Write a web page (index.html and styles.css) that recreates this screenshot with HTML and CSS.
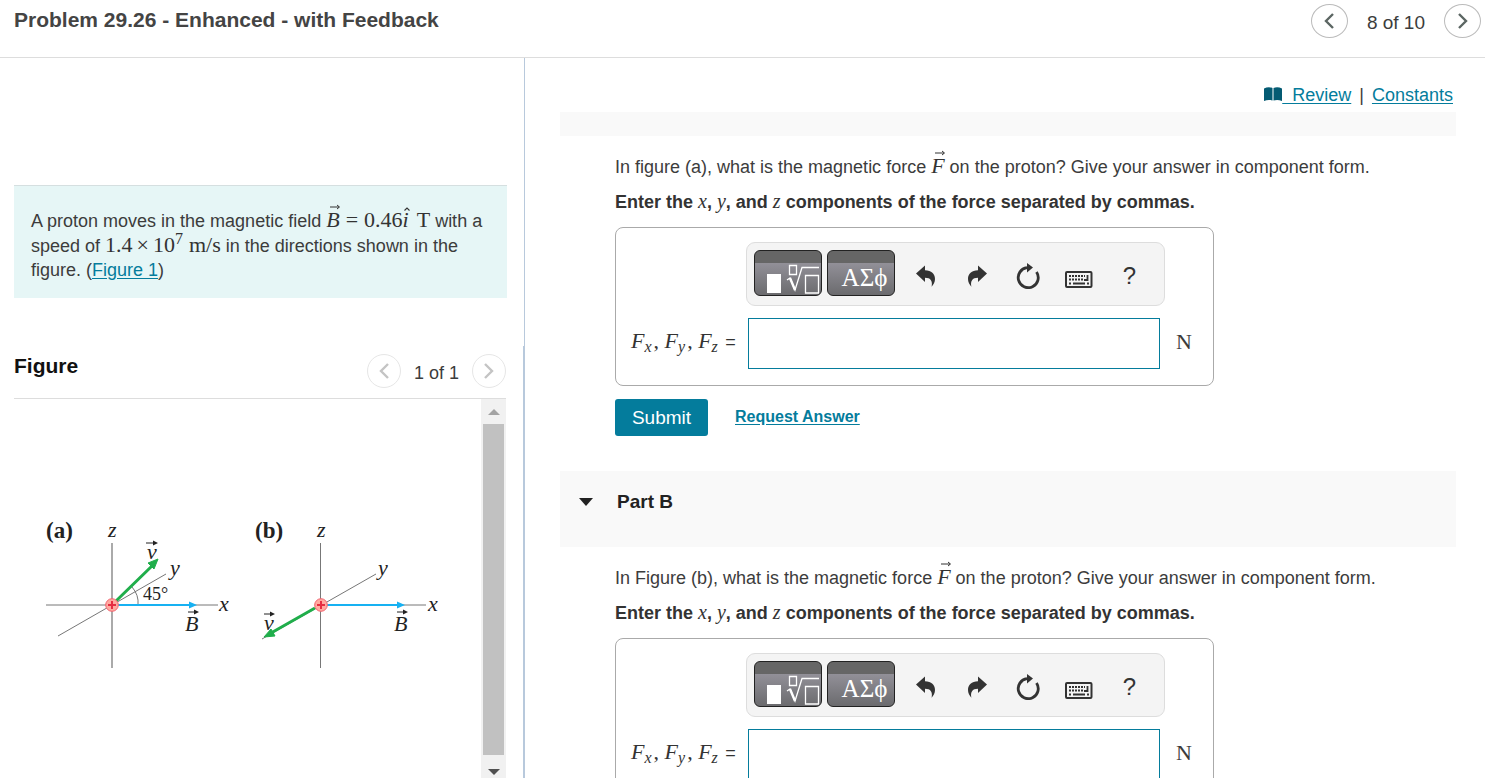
FILE: index.html
```html
<!DOCTYPE html>
<html lang="en">
<head>
<meta charset="utf-8">
<title>Problem 29.26 - Enhanced - with Feedback</title>
<link rel="stylesheet" href="styles.css">
</head>
<body>
<svg class="symbols" aria-hidden="true">
  <symbol id="vec" viewBox="0 0 12 6"><path d="M1 3h9M8 1l2.500 2L8 5" fill="none" stroke="currentColor" stroke-width="1"/></symbol>
  <symbol id="hat" viewBox="0 0 8 4"><path d="M1.500 3.500 4 1l2.500 2.500" fill="none" stroke="currentColor" stroke-width="1.100"/></symbol>
  <symbol id="left" viewBox="0 0 16 20"><path d="M12 3 5 10l7 7" fill="none" stroke="currentColor" stroke-width="2.400"/></symbol>
  <symbol id="right" viewBox="0 0 16 20"><path d="M4 3l7 7-7 7" fill="none" stroke="currentColor" stroke-width="2.400"/></symbol>
  <symbol id="template" viewBox="0 0 66 44">
    <path d="M12 23h14v19H12z" fill="#fff"/>
    <path d="M34.500 14.500h7v9h-7zM50.500 24.500h13v17.500h-13z" fill="none" stroke="#fff" stroke-width="1.300"/>
    <path d="M32 29l3-2 5 12 7-22.500h17" fill="none" stroke="#fff" stroke-width="1.300"/>
    <path d="M35 27l5 12" stroke="#fff" stroke-width="2.400"/>
  </symbol>
  <symbol id="undo" viewBox="0 0 20 22"><path d="M0 8.500 9 .5v4.800c6.500 0 10 3.500 10 8.700 0 3.200-1.500 5.700-3.400 7.700 1.200-5.500-.8-8.900-6.600-8.900v4.300z" fill="#333"/></symbol>
  <symbol id="redo" viewBox="0 0 20 22"><path d="M20 8.500 11 .5v4.800C4.500 5.300 1 8.800 1 14c0 3.200 1.500 5.700 3.400 7.700-1.200-5.500.8-8.900 6.600-8.900v4.300z" fill="#333"/></symbol>
  <symbol id="reset" viewBox="0 0 24 26"><path d="M11 4.700A10 10 0 1 0 20.500 9" fill="none" stroke="#333" stroke-width="2.800"/><path d="M11 0v9.500l6-5z" fill="#333"/></symbol>
  <symbol id="keyboard" viewBox="0 0 28 17">
    <rect x="1" y="1" width="25.500" height="15" rx="1" fill="none" stroke="#333" stroke-width="2"/>
    <path d="M4 5h16M4 8.500h15" fill="none" stroke="#333" stroke-width="1.800" stroke-dasharray="2 1"/>
    <path d="M22.500 4v5H19M8 12.500h12M4 12.500h2M22 12.500h2" fill="none" stroke="#333" stroke-width="1.800"/>
  </symbol>
  <symbol id="book" viewBox="0 0 18 15"><path d="M0 1.500C3 0 6 0 8.500 1v12.500C6 12.600 3 12.600 0 14zM9.500 1C12 0 15 0 18 1.500V14c-3-1.400-6-1.400-8.500-.5z" fill="#045b73"/></symbol>
</svg>

<header class="top">
  <h1>Problem 29.26 - Enhanced - with Feedback</h1>
  <nav class="pager large" aria-label="Problems">
    <button class="round" aria-label="Previous problem"><svg><use href="#left"/></svg></button>
    <span>8 of 10</span>
    <button class="round" aria-label="Next problem"><svg><use href="#right"/></svg></button>
  </nav>
</header>

<main class="workspace">
  <section class="side">
    <div class="statement">A proton moves in the magnetic field <span class="math"><i class="accent">B<svg class="vec"><use href="#vec"/></svg></i><span class="rel">=</span>0.46<i class="accent">i<svg class="hat"><use href="#hat"/></svg></i><span class="unit">T</span></span> with a speed of <span class="math">1.4<span class="times">×</span>10<sup>7</sup><span class="speed">m/s</span></span> in the directions shown in the figure. (<a href="#figure">Figure 1</a>)</div>

    <div class="figure-panel" id="figure">
      <div class="figure-head">
        <h2>Figure</h2>
        <nav class="pager small" aria-label="Figures">
          <button class="round" disabled aria-label="Previous figure"><svg><use href="#left"/></svg></button>
          <span>1 of 1</span>
          <button class="round" disabled aria-label="Next figure"><svg><use href="#right"/></svg></button>
        </nav>
      </div>
      <div class="figure-view">
        <svg class="diagram" viewBox="14 399 467 300" role="img" aria-label="Velocity and magnetic field directions">
          <g class="axes">
            <path class="thick" d="M112 543v125"/><path d="M46 605h172M58 636l108-62"/>
            <path d="M320.500 543v125M320 605h106M262 639l114-65"/>
            <path d="M132 587q7 8 6 18"/>
          </g>
          <g class="field"><path d="M118 605h72M327 605h70"/><path class="tip" d="M189 601.500l8 3.500-8 3.500zM397 601.500l8 3.500-8 3.500z"/></g>
          <g class="velocity"><path d="M116 601l37-36M315 608l-44 25"/><path class="tip" d="M158 559l-10 4 6 6zM264 637l7-8 4 7z"/></g>
          <g class="proton"><circle cx="112" cy="605" r="6.300"/><circle cx="321" cy="605" r="6.300"/><path d="M108 605h8M112 601v8M317 605h8M321 601v8"/></g>
          <g class="labels">
            <text class="tag" x="46" y="538">(a)</text><text class="tag" x="255" y="538">(b)</text>
            <text x="108" y="537">z</text><text x="317" y="537">z</text>
            <text x="170" y="575">y</text><text x="378" y="575">y</text>
            <text x="219" y="611">x</text><text x="428" y="611">x</text>
            <text x="147" y="559">v</text><text x="264" y="630">v</text>
            <text x="185" y="631">B</text><text x="394" y="631">B</text>
            <text class="angle" x="143" y="600">45°</text>
          </g>
          <path class="vectors" d="M146 543h9M264 614h9M188 612h9M397 612h9"/>
          <path class="vector-tips" d="M153 540.500l5 2.500-5 2.500zM270 611.500l5 2.500-5 2.500zM194 609.500l5 2.500-5 2.500zM403 609.500l5 2.500-5 2.500z"/>
        </svg>
        <div class="scrollbar" aria-hidden="true">
          <svg viewBox="0 0 12 6"><path d="M0 6 6 0l6 6z" fill="#a3a3a3"/></svg>
          <div class="thumb"></div>
          <svg viewBox="0 0 12 6"><path d="M0 0h12L6 6z" fill="#505050"/></svg>
        </div>
      </div>
    </div>
  </section>

  <section class="parts">
    <div class="help"><a href="#review"><svg class="book"><use href="#book"/></svg> &nbsp;Review</a><span>|</span><a href="#constants">Constants</a></div>
    <div class="band slim"></div>

    <form class="question">
      <p>In figure (a), what is the magnetic force <i class="accent math">F<svg class="vec"><use href="#vec"/></svg></i> on the proton? Give your answer in component form.</p>
      <p class="strong">Enter the <i class="var">x</i>, <i class="var">y</i>, and <i class="var">z</i> components of the force separated by commas.</p>
      <div class="answer">
        <div class="toolbar">
          <button type="button" class="key" aria-label="Templates"><svg><use href="#template"/></svg></button>
          <button type="button" class="key greek">ΑΣϕ</button>
          <button type="button" class="tool" aria-label="Undo"><svg width="20" height="22"><use href="#undo"/></svg></button>
          <button type="button" class="tool" aria-label="Redo"><svg width="20" height="22"><use href="#redo"/></svg></button>
          <button type="button" class="tool" aria-label="Reset"><svg width="24" height="26"><use href="#reset"/></svg></button>
          <button type="button" class="tool" aria-label="Keyboard shortcuts"><svg class="keyboard" width="28" height="17"><use href="#keyboard"/></svg></button>
          <button type="button" class="tool">?</button>
        </div>
        <div class="entry">
          <label for="force-a"><i>F<sub>x</sub></i>, <i>F<sub>y</sub></i>, <i>F<sub>z</sub></i> <span>=</span></label>
          <input id="force-a" type="text">
          <span class="newton">N</span>
        </div>
      </div>
      <div class="actions"><button type="button" class="submit">Submit</button><a href="#answer">Request Answer</a></div>
    </form>

    <div class="band"><button class="toggle" aria-label="Collapse Part B"><svg viewBox="0 0 14 8"><path d="M0 0h14L7 8z" fill="#222"/></svg></button><h2>Part B</h2></div>

    <form class="question">
      <p>In Figure (b), what is the magnetic force <i class="accent math">F<svg class="vec"><use href="#vec"/></svg></i> on the proton? Give your answer in component form.</p>
      <p class="strong">Enter the <i class="var">x</i>, <i class="var">y</i>, and <i class="var">z</i> components of the force separated by commas.</p>
      <div class="answer">
        <div class="toolbar">
          <button type="button" class="key" aria-label="Templates"><svg><use href="#template"/></svg></button>
          <button type="button" class="key greek">ΑΣϕ</button>
          <button type="button" class="tool" aria-label="Undo"><svg width="20" height="22"><use href="#undo"/></svg></button>
          <button type="button" class="tool" aria-label="Redo"><svg width="20" height="22"><use href="#redo"/></svg></button>
          <button type="button" class="tool" aria-label="Reset"><svg width="24" height="26"><use href="#reset"/></svg></button>
          <button type="button" class="tool" aria-label="Keyboard shortcuts"><svg class="keyboard" width="28" height="17"><use href="#keyboard"/></svg></button>
          <button type="button" class="tool">?</button>
        </div>
        <div class="entry">
          <label for="force-b"><i>F<sub>x</sub></i>, <i>F<sub>y</sub></i>, <i>F<sub>z</sub></i> <span>=</span></label>
          <input id="force-b" type="text">
          <span class="newton">N</span>
        </div>
      </div>
    </form>
  </section>
</main>
</body>
</html>
```

FILE: styles.css
```css
* { box-sizing: border-box; }

body {
  margin: 0;
  height: 100vh;
  overflow: hidden;
  display: flex;
  flex-direction: column;
  background: #fff;
  color: #3c3c3c;
  font: 18px/24px "Liberation Sans", Arial, sans-serif;
}

h1, h2, p { margin: 0; }
button { padding: 0; font: inherit; color: inherit; }
a { color: #047c9c; text-underline-offset: 2px; }
.symbols { position: absolute; width: 0; height: 0; }

.top {
  flex: none;
  display: flex;
  justify-content: space-between;
  height: 58px;
  padding: 4px 4px 0 14px;
  border-bottom: 1px solid #ddd;
}
.top h1 { padding-top: 4px; font-size: 21px; line-height: 24px; color: #444; }

.pager { display: flex; align-items: center; gap: 19px; height: 34px; }
.pager span { padding-top: 4px; }
.large { font-size: 19px; }
.round {
  width: 37px;
  height: 34px;
  display: grid;
  place-items: center;
  border: 1px solid #bbb;
  border-radius: 50%;
  background: #fff;
  color: #5c6663;
}
.round svg { width: 16px; height: 20px; }
.small { gap: 13px; }
.small .round { width: 34px; border-color: #e6e6e6; color: #c4c4c4; }

.workspace { flex: 1; min-height: 0; display: flex; }

.side {
  flex: 0 0 525px;
  display: flex;
  flex-direction: column;
  border-right: 1px solid #b8c9dc;
}
.statement {
  margin: 127px 17px 0 14px;
  padding: 22px 16px 16px 17px;
  border-top: 1px solid #d5dfe0;
  background: #e6f6f6;
}

.math { font-family: "Liberation Serif", serif; font-size: 22px; line-height: 24px; color: #333; }
.accent { position: relative; }
.vec { position: absolute; top: -3px; left: 3px; width: 12px; height: 6px; }
.hat { position: absolute; top: 0; left: 0; width: 8px; height: 4px; }
.rel { margin: 0 6px; }
.unit { margin-left: 8px; }
.times { margin: 0 4px; }
.speed { margin-left: 6px; }
sup { font-size: 16px; line-height: 0; vertical-align: 8px; }

.figure-panel {
  flex: 1;
  min-height: 0;
  display: flex;
  flex-direction: column;
  margin-top: 48px;
  padding: 8px 17px 0 14px;
  border-right: 1px solid #b8c9dc;
}
.figure-head {
  flex: none;
  display: flex;
  justify-content: space-between;
  height: 45px;
  border-bottom: 1px solid #ddd;
}
.figure-head h2 { font-size: 21px; color: #111; }
.figure-view { flex: 1; min-height: 0; display: flex; overflow: hidden; }
.diagram { flex: 1; min-width: 0; height: 300px; }

.axes path { fill: none; stroke: #777; stroke-width: 1; }
.axes .thick { stroke: #aaa; stroke-width: 2; }
.field path { stroke: #16b1f2; stroke-width: 2; }
.velocity path { stroke: #20ae4b; stroke-width: 3; }
.field .tip { fill: #16b1f2; stroke: none; }
.velocity .tip { fill: #20ae4b; stroke-width: 1; }
.proton circle { fill: #ffaaa0; stroke: #f26470; stroke-width: 1; }
.proton path { stroke: #e52e42; stroke-width: 2; }
.labels { font: italic 22px "Liberation Serif", serif; fill: #222; }
.labels .tag { font-size: 23px; font-style: normal; font-weight: bold; }
.labels .angle { font-size: 18px; font-style: normal; }
.vectors { stroke: #222; stroke-width: 1; }
.vector-tips { fill: #222; }

.scrollbar {
  flex: 0 0 25px;
  display: flex;
  flex-direction: column;
  align-items: center;
  gap: 9px;
  padding: 10px 2px 3px;
  background: #f1f1f1;
}
.scrollbar svg { flex: none; width: 12px; height: 6px; }
.thumb { flex: 1; width: 21px; margin-bottom: 5px; background: #c1c1c1; }

.parts { flex: 1; min-width: 0; padding: 0 29px 0 35px; overflow: hidden; }
.help {
  display: flex;
  justify-content: flex-end;
  gap: 8px;
  height: 54px;
  padding: 25px 3px 0 0;
}
.book { width: 18px; height: 15px; vertical-align: -1px; }
.band {
  display: flex;
  align-items: center;
  gap: 24px;
  height: 76px;
  padding: 0 19px 14px;
  background: #f9f9f9;
}
.slim { height: 24px; padding: 0; }
.band h2 { font-size: 19px; color: #222; }
.toggle { border: 0; background: none; width: 14px; height: 8px; display: grid; }

.question { padding: 18px 0 35px 55px; }
.question p { height: 24px; margin-bottom: 11px; white-space: nowrap; }
.question .strong { margin-bottom: 14px; font-weight: bold; color: #333; }
.var { font-family: "Liberation Serif", serif; font-size: 20px; font-weight: normal; line-height: 24px; }

.answer {
  max-width: 599px;
  padding: 14px 21px 16px 15px;
  border: 1px solid #aaa;
  border-radius: 8px;
}
.toolbar {
  display: flex;
  height: 64px;
  width: 419px;
  margin-left: 115px;
  padding: 7px;
  border: 1px solid #ddd;
  border-radius: 9px;
  background: #f4f4f4;
}
.key {
  flex: none;
  width: 68px;
  height: 46px;
  margin-right: 5px;
  border: 1px solid #222;
  border-radius: 6px;
  background: linear-gradient(#666 12px, #929098 12px, #6b6b6e);
  color: #fff;
  overflow: hidden;
}
.key svg { display: block; width: 66px; height: 44px; }
.greek { padding: 10px 0 0 7px; font: 25px/34px "Liberation Serif", serif; }
.tool { width: 51px; height: 52px; display: grid; place-items: center; border: 0; background: none; color: #333; font-size: 24px; }
.keyboard { margin-top: 6px; }

.entry { display: flex; align-items: center; margin-top: 12px; }
.entry label { flex: 0 0 117px; padding-bottom: 5px; font-family: "Liberation Serif", serif; font-size: 22px; color: #333; }
.entry label i { margin-right: 2px; }
.entry label span { font: 18px "Liberation Sans", sans-serif; }
.entry sub { font-size: 16px; line-height: 0; vertical-align: -4px; }
.entry input {
  flex: 1;
  min-width: 0;
  height: 51px;
  padding: 0 8px;
  border: 1px solid #047c9c;
  font: inherit;
}
.newton { margin-left: 16px; padding-bottom: 4px; font: 22px/24px "Liberation Serif", serif; }

.actions { display: flex; align-items: center; gap: 27px; margin-top: 13px; }
.submit { width: 93px; height: 37px; border: 0; border-radius: 3px; background: #047c9c; color: #fff; font-size: 19px; }
.actions a { padding-bottom: 2px; font-size: 16px; font-weight: bold; }
```
